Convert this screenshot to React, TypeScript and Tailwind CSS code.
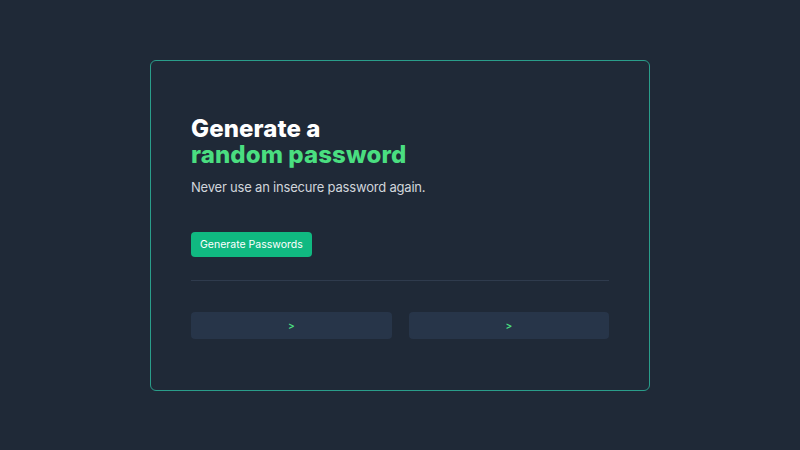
export default function App() {
  return (
    <div
      className="w-[800px] h-[450px] bg-[#1f2937] flex items-center justify-center"
      style={{ fontFamily: "Inter, 'Liberation Sans', sans-serif" }}
    >
      <div className="w-[500px] h-[331px] border border-[#2a9d8a] rounded-md px-10 pt-[55px] flex flex-col">
        <h1 className="text-[24px] leading-[26px] font-extrabold text-white tracking-[0.1px]">
          <span className="block">Generate a</span>
          <span className="block text-[#4ade80]">random password</span>
        </h1>
        <p className="mt-[9px] text-[13px] leading-5 tracking-[-0.2px] text-[#d1d5db]">
          Never use an insecure password again.
        </p>
        <div className="mt-[33px]">
          <button className="h-[25px] px-[9px] rounded bg-[#10b981] text-white text-[10.5px] font-normal">
            Generate Passwords
          </button>
        </div>
        <div className="mt-[23px] h-px bg-[#2f3b4d]" />
        <div className="mt-[31px] flex gap-[17px]">
          <div className="flex-1 h-[27px] rounded bg-[#273549] flex items-center justify-center text-[#4ade80] text-[10px] font-semibold">
            &gt;
          </div>
          <div className="flex-1 h-[27px] rounded bg-[#273549] flex items-center justify-center text-[#4ade80] text-[10px] font-semibold">
            &gt;
          </div>
        </div>
      </div>
    </div>
  );
}
